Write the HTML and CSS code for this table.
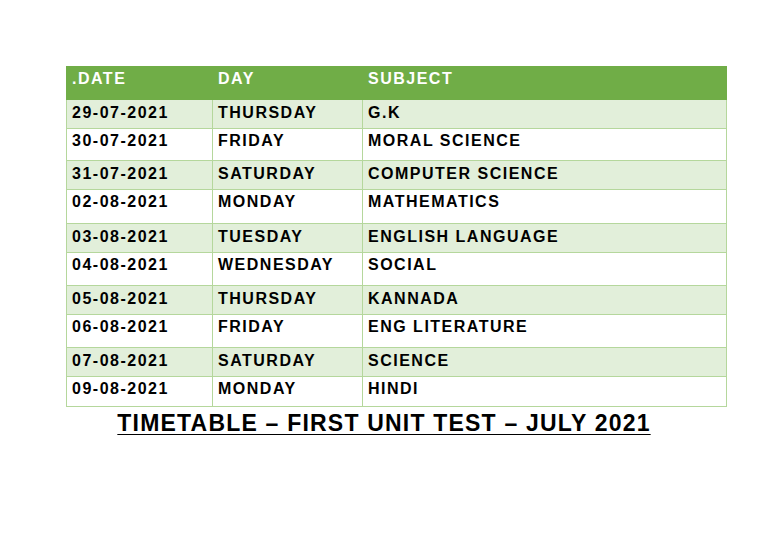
FILE: index.html
```html
<!DOCTYPE html>
<html>
<head>
<meta charset="utf-8">
<link rel="stylesheet" href="styles.css">
</head>
<body>
<div class="page">
  <table class="tt">
    <colgroup><col class="c1"><col class="c2"><col class="c3"></colgroup>
    <thead>
      <tr class="head"><th>.DATE</th><th>DAY</th><th>SUBJECT</th></tr>
    </thead>
    <tbody>
      <tr class="g"><td>29-07-2021</td><td>THURSDAY</td><td>G.K</td></tr>
      <tr class="w"><td>30-07-2021</td><td>FRIDAY</td><td>MORAL SCIENCE</td></tr>
      <tr class="g"><td>31-07-2021</td><td>SATURDAY</td><td>COMPUTER SCIENCE</td></tr>
      <tr class="w tall"><td>02-08-2021</td><td>MONDAY</td><td>MATHEMATICS</td></tr>
      <tr class="g"><td>03-08-2021</td><td>TUESDAY</td><td>ENGLISH LANGUAGE</td></tr>
      <tr class="w mid"><td>04-08-2021</td><td>WEDNESDAY</td><td>SOCIAL</td></tr>
      <tr class="g"><td>05-08-2021</td><td>THURSDAY</td><td>KANNADA</td></tr>
      <tr class="w mid"><td>06-08-2021</td><td>FRIDAY</td><td>ENG LITERATURE</td></tr>
      <tr class="g"><td>07-08-2021</td><td>SATURDAY</td><td>SCIENCE</td></tr>
      <tr class="w last"><td>09-08-2021</td><td>MONDAY</td><td>HINDI</td></tr>
    </tbody>
  </table>
  <h1 class="title">TIMETABLE – FIRST UNIT TEST – JULY 2021</h1>
</div>
</body>
</html>
```
FILE: styles.css
```css
html, body {
  margin: 0;
  padding: 0;
  background: #ffffff;
}
.page {
  width: 768px;
  padding-top: 66px;
}
.tt {
  margin-left: 66px;
  width: 660px;
  border-collapse: collapse;
  table-layout: fixed;
  font-family: "Liberation Sans", Arial, sans-serif;
  font-weight: bold;
  font-size: 16px;
  letter-spacing: 1.5px;
  color: #000000;
}
.c1 { width: 146px; }
.c2 { width: 150px; }
.c3 { width: 364px; }
.tt th, .tt td {
  text-align: left;
  vertical-align: top;
  padding: 4px 0 0 5px;
  line-height: 18px;
  white-space: nowrap;
}
.tt td {
  border: 1px solid #b5d79c;
}
.head th {
  background: #70ad47;
  color: #ffffff;
  height: 29px;
  padding-top: 3px;
  border: 1px solid #70ad47;
}
.g td {
  background: #e2efda;
  height: 24px;
  padding-top: 4px;
}
.w td {
  background: #ffffff;
  height: 28px;
  padding-top: 3px;
}
.w.tall td { height: 30px; }
.w.mid td { height: 29px; }
.w.last td { height: 26px; }
.title {
  margin: 3px 0 0 0;
  text-align: center;
  font-family: "Liberation Sans", Arial, sans-serif;
  font-weight: bold;
  font-size: 23px;
  letter-spacing: 1.2px;
  line-height: 26px;
  color: #000000;
  text-decoration: underline double;
  text-underline-offset: 3px;
  text-decoration-thickness: 1px;
}
```
